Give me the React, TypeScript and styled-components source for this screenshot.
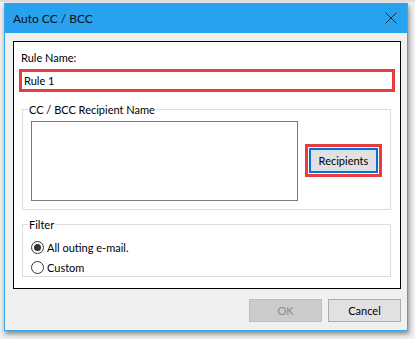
import React from "react";
import styled, { createGlobalStyle } from "styled-components";

const HIGHLIGHT = "#e63c3f";
const ACCENT = "#28a2ee";
const FONT = `Lato, "Noto Sans", Arial, sans-serif`;

const GlobalStyle = createGlobalStyle`
  html, body {
    margin: 0;
    padding: 0;
    background: #ececec;
    font-family: ${FONT};
    font-size: 11px;
    color: #000;
  }
`;

const Screen = styled.div`
  width: 415px;
  height: 339px;
  overflow: hidden;
  padding: 1px 0 0 4px;
  box-sizing: border-box;
  background-color: #f0f0f0;
  border-top: 2px solid #dcdcdc;
`;

const Dialog = styled.div`
  width: 404px;
  height: 328px;
  box-sizing: border-box;
  border: 1px solid #3aa6ee;
  border-top: none;
  background-color: #f0f0f0;
  display: flex;
  flex-direction: column;
  box-shadow: 1px 3px 5px rgba(0, 0, 0, 0.45);
`;

const Caption = styled.div`
  height: 30px;
  box-sizing: border-box;
  flex-shrink: 0;
  border-top: 4px solid ${ACCENT};
  background-color: ${ACCENT} !important;
  display: flex;
  align-items: center;
  justify-content: space-between;
  padding: 0 8px 4px 8px;
`;

const Title = styled.div`
  font-size: 12px;
  color: #111;
  padding-top: 1px;
`;

const CloseIcon = styled.svg`
  display: block;
  margin-right: 2px;
`;

const Body = styled.div`
  flex: 1;
  padding: 8px 6px 0 8px;
  display: flex;
  flex-direction: column;
  background-color: #f0f0f0;
`;

const Panel = styled.div`
  height: 248px;
  box-sizing: border-box;
  border: 1px solid #000;
  background: #fff;
  padding: 8px 5px 0 5px;
  display: flex;
  flex-direction: column;
`;

const FieldLabel = styled.div`
  line-height: 15px;
  margin-left: 2px;
`;

const HighlightFrame = styled.div`
  border: 3px solid ${HIGHLIGHT};
  background: #fff;
  box-sizing: border-box;
`;

const NameFrame = styled(HighlightFrame)`
  margin-top: 4px;
  height: 23px;
`;

const NameInput = styled.div`
  height: 17px;
  display: flex;
  align-items: center;
  padding-left: 2px;
`;

const Group = styled.fieldset<{ $top: number }>`
  margin: ${p => p.$top}px 4px 0 3px;
  padding: 0 8px;
  border: 1px solid #dcdcdc;
  min-width: 0;
`;

const Legend = styled.legend`
  padding: 0 1px;
  margin-left: -3px;
  line-height: 15px;
`;

const RecipientRow = styled.div`
  display: flex;
  align-items: center;
  padding: 4px 0 8px 0;
`;

const ListBox = styled.div`
  width: 270px;
  height: 80px;
  box-sizing: border-box;
  border: 1px solid #7a7a7a;
  background: #fff;
`;

const RecipientFrame = styled(HighlightFrame)`
  margin-left: 7px;
  margin-bottom: 2px;
  width: 78px;
  height: 33px;
  padding: 1px;
`;

const FocusButton = styled.button`
  display: block;
  width: 100%;
  height: 100%;
  box-sizing: border-box;
  border: 2px solid #0a6fce;
  box-shadow: inset 0 0 0 1px #cfe6f8;
  background: #e1e1e1;
  font-family: ${FONT};
  font-size: 11px;
  color: #000;
  padding: 0;
`;

const RadioList = styled.div`
  display: flex;
  flex-direction: column;
  gap: 3px;
  padding-top: 7px;
`;

const RadioRow = styled.label`
  display: flex;
  align-items: center;
  height: 17px;
  gap: 3px;
`;

const RadioCircle = styled.span<{ $checked?: boolean }>`
  width: 13px;
  height: 13px;
  box-sizing: border-box;
  border-radius: 50%;
  border: 1px solid #333;
  background: #fff;
  display: flex;
  align-items: center;
  justify-content: center;

  &::after {
    content: "";
    width: 7px;
    height: 7px;
    border-radius: 50%;
    background: ${p => (p.$checked ? "#333" : "transparent")};
  }
`;

const Footer = styled.div`
  display: flex;
  justify-content: flex-end;
  gap: 6px;
  margin-top: 10px;
`;

const DialogButton = styled.button<{ $disabled?: boolean }>`
  width: 73px;
  height: 23px;
  box-sizing: border-box;
  border: 1px solid ${p => (p.$disabled ? "#bfbfbf" : "#adadad")};
  background: ${p => (p.$disabled ? "#cccccc" : "#e1e1e1")};
  color: ${p => (p.$disabled ? "#8a8a8a" : "#000")};
  font-family: ${FONT};
  font-size: 11px;
  padding: 0;
`;

export default function App() {
  return (
    <>
      <GlobalStyle />
      <Screen>
        <Dialog>
          <Caption>
            <Title>Auto CC / BCC</Title>
            <CloseIcon width="12" height="12" viewBox="0 0 12 12">
              <path d="M0.5 0.5 L11.5 11.5 M11.5 0.5 L0.5 11.5" stroke="#1d2a38" strokeWidth="1" />
            </CloseIcon>
          </Caption>
          <Body>
            <Panel>
              <FieldLabel>Rule Name:</FieldLabel>
              <NameFrame>
                <NameInput>Rule 1</NameInput>
              </NameFrame>

              <Group $top={10}>
                <Legend>CC / BCC Recipient Name</Legend>
                <RecipientRow>
                  <ListBox />
                  <RecipientFrame>
                    <FocusButton>Recipients</FocusButton>
                  </RecipientFrame>
                </RecipientRow>
              </Group>

              <Group $top={7}>
                <Legend>Filter</Legend>
                <RadioList>
                  <RadioRow>
                    <RadioCircle $checked />
                    All outing e-mail.
                  </RadioRow>
                  <RadioRow>
                    <RadioCircle />
                    Custom
                  </RadioRow>
                </RadioList>
              </Group>
            </Panel>
            <Footer>
              <DialogButton $disabled>OK</DialogButton>
              <DialogButton>Cancel</DialogButton>
            </Footer>
          </Body>
        </Dialog>
      </Screen>
    </>
  );
}
